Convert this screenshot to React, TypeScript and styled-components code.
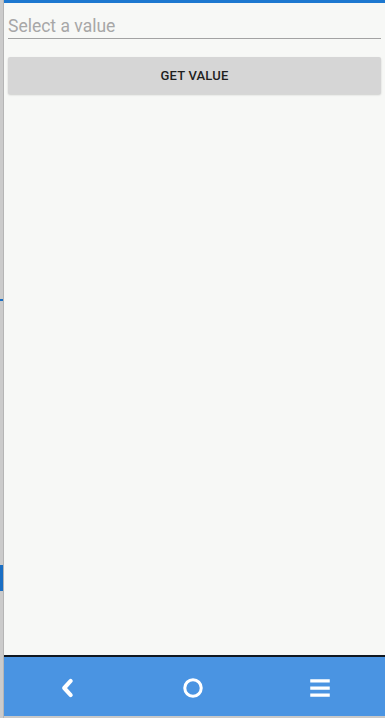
import { createGlobalStyle } from 'styled-components'
import styled from 'styled-components'

const Global = createGlobalStyle`
  html, body { margin: 0; padding: 0; background: #c9c9c9; }
  body { font-family: Roboto, "Liberation Sans", sans-serif; }
`

const Frame = styled.div`
  display: flex;
  width: 385px;
  height: 718px;
  overflow: hidden;
  background: #c9c9c9;
`

const Edge = styled.div`
  width: 4px;
  flex: none;
  display: flex;
  flex-direction: column;
  background: #cbcbcb;
  border-right: 1px solid #b5b5b5;
  box-sizing: border-box;
`

interface MarkProps {
    top: number;
    size: number;
}

const EdgeMark = styled.div<MarkProps>`
  margin-top: ${({ top }) => top}px;
  height: ${({ size }) => size}px;
  background: #1a6fc4;
`

const Screen = styled.div`
  flex: 1;
  display: flex;
  flex-direction: column;
  background: #f7f8f6;
  border-top: 3px solid #1d78d0;
  height: 716px;
  box-sizing: border-box;
`

const Content = styled.div`
  flex: 1;
  display: flex;
  flex-direction: column;
  padding: 0 4px 0 4px;
`

const Picker = styled.div`
  height: 36px;
  display: flex;
  align-items: flex-end;
  border-bottom: 1.5px solid #a3a3a3;
  padding-bottom: 2px;
  box-sizing: border-box;
  font-size: 17.5px;
  color: #a7a7a7;
`

const Button = styled.button`
  margin-top: 18px;
  height: 37px;
  border: none;
  border-radius: 2px;
  background: #d6d6d6;
  box-shadow: 0 1px 2px rgba(0, 0, 0, 0.18);
  font-family: Roboto, "Liberation Sans", sans-serif;
  font-weight: 500;
  font-size: 13px;
  color: #1f1f1f;
  letter-spacing: 0.2px;
`

const NavBar = styled.nav`
  height: 61px;
  flex: none;
  display: grid;
  grid-template-columns: 1fr 1fr 1fr;
  align-items: center;
  justify-items: center;
  background: #4a94e2;
  border-top: 2px solid #101820;
  box-sizing: border-box;
`

interface IconProps {
    shift: number;
}

const NavIcon = styled.svg<IconProps>`
  width: 26px;
  height: 26px;
  margin-top: 2px;
  transform: translateX(${({ shift }) => shift}px);
`

export default function App() {
    return (
        <>
            <Global />
            <Frame>
                <Edge>
                    <EdgeMark top={299} size={2} />
                    <EdgeMark top={264} size={26} />
                </Edge>
                <Screen>
                    <Content>
                        <Picker>Select a value</Picker>
                        <Button>GET VALUE</Button>
                    </Content>
                    <NavBar>
                        <NavIcon viewBox="0 0 24 24" shift={0}>
                            <path d="M14.5 5.5 L8.5 12 L14.5 18.5" fill="none" stroke="#fff" strokeWidth="3.8" strokeLinecap="round" strokeLinejoin="round" />
                        </NavIcon>
                        <NavIcon viewBox="0 0 24 24" shift={-2}>
                            <circle cx="12" cy="12" r="7.6" fill="none" stroke="#fff" strokeWidth="2.8" />
                        </NavIcon>
                        <NavIcon viewBox="0 0 24 24" shift={-2}>
                            <path d="M3 5.5 H21 M3 12 H21 M3 18.5 H21" stroke="#fff" strokeWidth="3" />
                        </NavIcon>
                    </NavBar>
                </Screen>
            </Frame>
        </>
    )
}
